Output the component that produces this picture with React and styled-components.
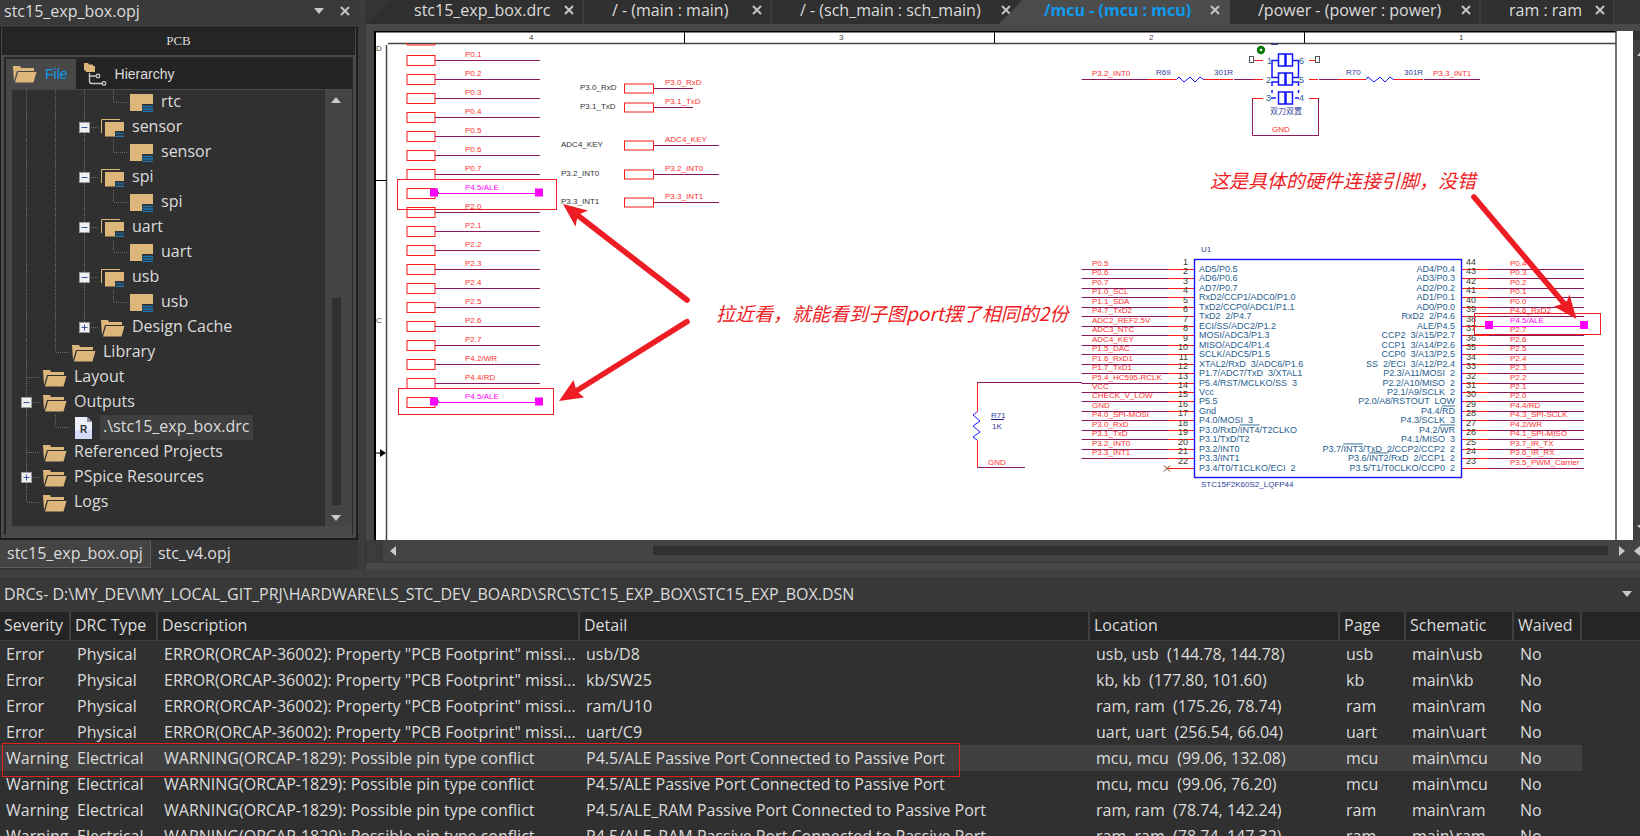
import React from 'react'
import styled, { createGlobalStyle, css } from 'styled-components'

const GlobalStyle = createGlobalStyle`
  * {
    box-sizing: border-box;
  }

  body {
    margin: 0;
    background: #3c3c3c;
    color: #dcdcdc;
    font-family: 'Open Sans', 'Noto Sans CJK SC', sans-serif;
    font-size: 16px;
  }

  button {
    margin: 0;
    padding: 0;
    border: 0;
    background: none;
    color: inherit;
    font: inherit;
    cursor: pointer;
  }

  svg {
    display: block;
  }
`

const App = styled.div`
  display: flex;
  flex-direction: column;
  height: 100vh;
  overflow: hidden;
`

const Workspace = styled.main`
  display: flex;
  flex: none;
`

/* ---------- project panel ---------- */

const Project = styled.aside`
  display: flex;
  flex-direction: column;
  flex: none;
  width: 358px;
  background: #363636;
`

const PanelTitle = styled.header`
  display: flex;
  align-items: center;
  gap: 16px;
  height: 27px;
  padding: 0 8px 6px 4px;
  background: #3a3a3a;
`

const TitleText = styled.span`
  flex: 1;
`

const ProjectFrame = styled.div`
  display: flex;
  flex-direction: column;
  flex: 1;
  border: 2px solid #1c1c1c;
  border-left-width: 1px;
  border-top-width: 1px;
  background: #4a4a4a;
`

const PcbTitle = styled.h1`
  margin: 0 1px;
  height: 27px;
  background: #252525;
  font-family: 'Liberation Serif', serif;
  font-size: 13px;
  font-weight: 400;
  line-height: 25px;
  text-align: center;
`

const ViewFrame = styled.div`
  display: flex;
  flex-direction: column;
  flex: 1;
  margin: 2px 3px 3px;
  border: solid #262626;
  border-width: 2px 1px 0 2px;
  background: #484848;
`

const ViewTabs = styled.div`
  display: flex;
  height: 30px;
  background: #232323;
`

const ViewTab = styled.button`
  display: flex;
  align-items: center;
  gap: 8px;
  padding: 0 8px 0 7px;
  background: ${props => (props.$active ? '#484848' : 'transparent')};
  color: ${props => (props.$active ? '#0e9bec' : '#dcdcdc')};
  font-family: 'Liberation Sans', sans-serif;
  font-size: 14px;
`

const TreeArea = styled.div`
  display: flex;
  flex: 1;
  margin: 1px 1px 9px 6px;
`

const Tree = styled.ul`
  flex: 1;
  margin: 0;
  padding: 0 0 10px;
  list-style: none;
  background: #303030;
`

const TreeRow = styled.li`
  display: flex;
  align-items: center;
  height: 25px;
`

const TreeLabel = styled.button`
  height: 25px;
  padding: 0 3px 2px;
  margin-left: 4px;
  line-height: 23px;
  white-space: nowrap;
  background: ${props => (props.$selected ? '#3f3f3f' : 'transparent')};
`

const TreeScroll = styled.div`
  display: flex;
  flex-direction: column;
  align-items: center;
  width: 26px;
  padding: 7px 4px 5px 0;
  background: #444;
`

const TreeThumb = styled.div`
  width: 9px;
  height: 207px;
  margin: auto 0 10px;
  background: #303030;
`

const ProjectTabs = styled.div`
  display: flex;
  height: 30px;
`

const ProjectTab = styled.button`
  height: 28px;
  padding: 0 7px 2px;
  border: solid ${props => (props.$active ? '#5c5c5c' : 'transparent')};
  border-width: 0 1px 1px 0;
  background: ${props => (props.$active ? '#444' : 'transparent')};
`

/* ---------- schematic editor ---------- */

const Editor = styled.section`
  display: flex;
  flex-direction: column;
  flex: 1;
  min-width: 0;
  margin-left: 7px;
  border-left: 1px solid #333;
`

const EditorTabs = styled.nav`
  display: flex;
  height: 24px;
  background: #343434;
`

const EditorTab = styled.div`
  display: flex;
  justify-content: space-between;
  align-items: center;
  flex: none;
  width: ${props => props.$width}px;
  padding: 0 8px 4px 28px;
  border-right: 2px solid #3d3d3d;
  background: #303030;
  white-space: nowrap;

  ${props =>
    props.$slanted &&
    css`
      padding-left: 48px;
      clip-path: polygon(24px 0, 100% 0, 100% 100%, 0 100%);
    `}

  ${props =>
    props.$active &&
    css`
      margin-left: -22px;
      padding-left: 45px;
      background: #4c4c4c;
      border-color: #4c4c4c;
      color: #0e9bec;
      font-weight: 700;
    `}
`

const Viewport = styled.div`
  display: flex;
  padding: 7px 0 0 8px;
  background: #484848;
`

const Sheet = styled.div`
  flex: 1;
  min-width: 0;
  overflow: hidden;
  background: #fff;
`

const SideScroll = styled.div`
  display: flex;
  flex-direction: column;
  justify-content: space-between;
  flex: none;
  width: 7px;
  padding: 10px 0 9px 4px;
  overflow: hidden;
  background: #404040;
  border-top: 9px solid #333;
`

const BottomScroll = styled.div`
  display: flex;
  align-items: center;
  gap: 9px;
  height: 21px;
  margin-left: 8px;
  padding: 0 0 0 7px;
  background: #444;
  border-left: 9px solid #3a3a3a;
`

const SheetThumb = styled.div`
  flex: 1;
  height: 9px;
  margin: 0 2px 0 248px;
  background: #303030;
`

const EditorFoot = styled.div`
  height: 9px;
  border-top: 2px solid #3a3a3a;
  background: #484848;
`

const Splitter = styled.div`
  flex: none;
  height: 7px;
  background: #404040;
`

/* ---------- DRC panel ---------- */

const Drc = styled.section`
  flex: 1;
  min-height: 0;
  overflow: hidden;
  background: #303030;
`

const DrcTitle = styled.header`
  display: flex;
  align-items: center;
  height: 35px;
  padding: 0 8px 2px 4px;
  background: #383838;
`

const TableWrap = styled.div`
  position: relative;
`

const Table = styled.table`
  width: 100%;
  table-layout: fixed;
  border-collapse: separate;
  border-spacing: 0;
`

const Th = styled.th`
  height: 29px;
  padding: 0 0 2px 4px;
  border-right: 2px solid #404040;
  border-bottom: 1px solid #404040;
  background: #252525;
  font-weight: 400;
  text-align: left;
  white-space: nowrap;

  &:last-child {
    border-right: 0;
  }
`

const Tr = styled.tr`
  td:not(:last-child) {
    background: ${props => (props.$selected ? '#404040' : 'transparent')};
  }
`

const Td = styled.td`
  height: 26px;
  padding: 0 0 0 6px;
  overflow: hidden;
  line-height: 24px;
  text-overflow: ellipsis;
  white-space: pre;
`

// Marks the warning row, lies over the table
const RowMark = styled.div`
  position: absolute;
  top: 131px;
  left: 2px;
  width: 958px;
  height: 34px;
  border: 1px solid #e02020;
  pointer-events: none;
`

/* ---------- icons ---------- */

const Arrow = ({ dir = 'down' }) => {
  const d = {
    down: 'M0 0H10L5 6Z',
    up: 'M0 6H10L5 0Z',
    left: 'M6 0V10L0 5Z',
    right: 'M0 0V10L6 5Z',
  }[dir]
  const flat = dir === 'down' || dir === 'up'
  return (
    <svg width={flat ? 10 : 6} height={flat ? 6 : 10} aria-hidden="true">
      <path d={d} fill="#c8c8c8" />
    </svg>
  )
}

const Cross = () => (
  <svg width="10" height="10" viewBox="0 0 10 10" aria-hidden="true">
    <path d="M1 1L9 9M9 1L1 9" stroke="#c4c4c4" strokeWidth="2" />
  </svg>
)

const Folder = () => (
  <svg width="24" height="18" viewBox="0 0 24 18" aria-hidden="true">
    <path d="M0 1H7L8 3H21V6H4L1 16Z" fill="#dcb67a" />
    <path d="M5 7H23.500L20.500 17.500H2Z" fill="#dcb67a" />
  </svg>
)

const Page = () => (
  <svg width="24" height="18" viewBox="0 0 24 18" aria-hidden="true">
    <path d="M0 0H23V10H12V17H0Z" fill="#dcb67a" />
    <path d="M12.500 12.500H23M12.500 15H23M12.500 17.500H23" stroke="#1e78b8" strokeWidth="1.300" />
  </svg>
)

const PageStack = () => (
  <svg width="24" height="18" viewBox="0 0 24 18" aria-hidden="true">
    <path d="M.5 14V.5H19" fill="none" stroke="#dcb67a" />
    <path d="M4 3H23V12H14V17.500H4Z" fill="#dcb67a" />
    <path d="M14.500 13.500H23V15.500H14.500Z" fill="#1d5c8c" />
    <path d="M14.500 17.300H23" stroke="#2a8fd6" />
  </svg>
)

const Report = () => (
  <svg width="24" height="24" viewBox="0 0 24 24" aria-hidden="true">
    <path d="M3 1H15L20 6V23H3Z" fill="#eceffb" />
    <path d="M3 14H20V23H3Z" fill="#d5dafa" />
    <path d="M15 1V6H20Z" fill="#8c8f9c" />
    <text x="11.500" y="17" textAnchor="middle" fontSize="10" fontWeight="700" fill="#333" fontFamily="Liberation Sans">
      R
    </text>
  </svg>
)

const HierarchyIcon = () => (
  <svg width="24" height="24" viewBox="0 0 24 24" aria-hidden="true">
    <path d="M1 1H5L6 2.500H10V9H3L1 8Z" fill="#dcb67a" />
    <path d="M3 4H12V10H3Z" fill="#dcb67a" />
    <path d="M6.500 11V19Q6.500 21.500 9 21.500H19.500M6.500 14H13" fill="none" stroke="#c8c8c8" strokeWidth="1.400" />
    <circle cx="15" cy="14" r="1.800" fill="none" stroke="#c8c8c8" strokeWidth="1.300" />
    <circle cx="21" cy="21.500" r="1.800" fill="none" stroke="#c8c8c8" strokeWidth="1.300" />
  </svg>
)

const icons = { folder: Folder, page: Page, stack: PageStack, report: Report }

/* ---------- project tree ---------- */

// guides: one letter per level. i = line, l = last item, t = branch,
// - and + = expander, e = last expander, space = nothing
const tree = [
  { guides: 'iiil', icon: 'page', label: 'rtc' },
  { guides: 'ii-', icon: 'stack', label: 'sensor' },
  { guides: 'iiil', icon: 'page', label: 'sensor' },
  { guides: 'ii-', icon: 'stack', label: 'spi' },
  { guides: 'iiil', icon: 'page', label: 'spi' },
  { guides: 'ii-', icon: 'stack', label: 'uart' },
  { guides: 'iiil', icon: 'page', label: 'uart' },
  { guides: 'ii-', icon: 'stack', label: 'usb' },
  { guides: 'iiil', icon: 'page', label: 'usb' },
  { guides: 'iie', icon: 'folder', label: 'Design Cache' },
  { guides: 'il', icon: 'folder', label: 'Library' },
  { guides: 't', icon: 'folder', label: 'Layout' },
  { guides: '-', icon: 'folder', label: 'Outputs' },
  { guides: 'il', icon: 'report', label: '.\\stc15_exp_box.drc', selected: true },
  { guides: 't', icon: 'folder', label: 'Referenced Projects' },
  { guides: '+', icon: 'folder', label: 'PSpice Resources' },
  { guides: 'l', icon: 'folder', label: 'Logs' },
]

const Guide = ({ kind }) => {
  const open = kind === '-'
  const expander = open || kind === '+' || kind === 'e'
  const bottom = kind === 'l' || kind === 'e' ? 12 : 25
  return (
    <svg width="29" height="25" aria-hidden="true">
      <path d={`M14.500 0V${bottom}`} stroke="#6c6c6c" strokeDasharray="1 1" />
      {kind !== 'i' && <path d="M15 12.500H30" stroke="#6c6c6c" strokeDasharray="1 1" />}
      {expander && (
        <g>
          <rect x="9.500" y="7.500" width="10" height="10" fill="#f0f0f0" stroke="#9a9a9a" />
          <path d={open ? 'M11.500 12.500H17.500' : 'M11.500 12.500H17.500M14.500 9.500V15.500'} stroke="#3b55a0" />
        </g>
      )}
    </svg>
  )
}

const IconSlot = styled.span`
  display: flex;
  flex: none;
  width: 24px;
  margin-left: 2px;
`

const TreeItem = ({ guides, icon, label, selected }) => {
  const Icon = icons[icon]
  return (
    <TreeRow>
      {guides.split('').map((kind, i) => (
        <Guide key={i} kind={kind} />
      ))}
      <IconSlot>
        <Icon />
      </IconSlot>
      <TreeLabel $selected={selected}>{label}</TreeLabel>
    </TreeRow>
  )
}

/* ---------- schematic ---------- */

const Drawing = styled.svg`
  font-family: 'Liberation Sans', 'Noto Sans CJK SC', sans-serif;
  font-size: 8px;

  text,
  tspan {
    white-space: pre;
  }

  .wire {
    stroke: #8a1a5c;
    fill: none;
  }
  .pin {
    stroke: #ff1a1a;
    fill: none;
  }
  .part {
    stroke: #1414ff;
    fill: none;
  }
  .net {
    fill: #ff3030;
  }
  .ref {
    fill: #30409c;
  }
  .name {
    fill: #27608f;
    font-size: 9px;
  }
  .number {
    fill: #3a3a2c;
    font-size: 9px;
  }
  .picked {
    fill: #f0f;
  }
  .mark {
    stroke: #ee1c24;
    fill: none;
  }
  .note {
    fill: #ee1c24;
    font-family: 'Noto Sans CJK SC', sans-serif;
    font-size: 19px;
    font-style: italic;
  }
  .over {
    text-decoration: overline;
  }
`

const leftPorts = [
  'P0.1', 'P0.2', 'P0.3', 'P0.4', 'P0.5', 'P0.6', 'P0.7', 'P4.5/ALE', 'P2.0', 'P2.1',
  'P2.2', 'P2.3', 'P2.4', 'P2.5', 'P2.6', 'P2.7', 'P4.2/WR', 'P4.4/RD', 'P4.5/ALE',
]

const midPorts = [
  { label: 'P3.0_RxD', y: 88, x: 580, end: 693 },
  { label: 'P3.1_TxD', y: 107, x: 580, end: 693 },
  { label: 'ADC4_KEY', y: 145, x: 561, end: 719 },
  { label: 'P3.2_INT0', y: 174, x: 561, end: 719 },
  { label: 'P3.3_INT1', y: 202, x: 561, end: 719 },
]

const pinsLeft = [
  ['P0.5', 'AD5/P0.5'],
  ['P0.6', 'AD6/P0.6'],
  ['P0.7', 'AD7/P0.7'],
  ['P1.0_SCL', 'RxD2/CCP1/ADC0/P1.0'],
  ['P1.1_SDA', 'TxD2/CCP0/ADC1/P1.1'],
  ['P4.7_TxD2', 'TxD2  2/P4.7'],
  ['ADC2_REF2.5V', 'ECI/SS/ADC2/P1.2'],
  ['ADC3_NTC', 'MOSI/ADC3/P1.3'],
  ['ADC4_KEY', 'MISO/ADC4/P1.4'],
  ['P1.5_DAC', 'SCLK/ADC5/P1.5'],
  ['P1.6_RxD1', 'XTAL2/RxD  3/ADC6/P1.6'],
  ['P1.7_TxD1', 'P1.7/ADC7/TxD  3/XTAL1'],
  ['P5.4_HC595-RCLK', 'P5.4/RST/MCLKO/SS  3'],
  ['VCC', 'Vcc'],
  ['CHECK_V_LOW', 'P5.5'],
  ['GND', 'Gnd'],
  ['P4.0_SPI-MOSI', 'P4.0/MOSI  3'],
  ['P3.0_RxD', 'P3.0/RxD/~INT4~/T2CLKO'],
  ['P3.1_TxD', 'P3.1/TxD/T2'],
  ['P3.2_INT0', 'P3.2/INT0'],
  ['P3.3_INT1', 'P3.3/INT1'],
  [null, 'P3.4/T0/T1CLKO/ECI  2'],
]

const pinsRight = [
  ['P0.4', 'AD4/P0.4'],
  ['P0.3', 'AD3/P0.3'],
  ['P0.2', 'AD2/P0.2'],
  ['P0.1', 'AD1/P0.1'],
  ['P0.0', 'AD0/P0.0'],
  ['P4.6_RxD2', 'RxD2  2/P4.6'],
  ['P4.5/ALE', 'ALE/P4.5'],
  ['P2.7', 'CCP2  3/A15/P2.7'],
  ['P2.6', 'CCP1  3/A14/P2.6'],
  ['P2.5', 'CCP0  3/A13/P2.5'],
  ['P2.4', 'SS  2/ECI  3/A12/P2.4'],
  ['P2.3', 'P2.3/A11/MOSI  2'],
  ['P2.2', 'P2.2/A10/MISO  2'],
  ['P2.1', 'P2.1/A9/SCLK  2'],
  ['P2.0', 'P2.0/A8/RSTOUT  LOW'],
  ['P4.4/RD', 'P4.4/~RD~'],
  ['P4.3_SPI-SCLK', 'P4.3/SCLK  3'],
  ['P4.2/WR', 'P4.2/~WR~'],
  ['P4.1_SPI-MISO', 'P4.1/MISO  3'],
  ['P3.7_IR_TX', 'P3.7/~INT3~/TxD  2/CCP2/CCP2  2'],
  ['P3.6_IR_RX', 'P3.6/~INT2~/RxD  2/CCP1  2'],
  ['P3.5_PWM_Carrier', 'P3.5/T1/T0CLKO/CCP0  2'],
]

const pinY = i => Math.round(269 + i * 9.46) + 0.5

// text between ~ is active low and gets a bar
const PinName = ({ text, ...rest }) => (
  <text className="name" {...rest}>
    {text.split('~').map((part, i) => (
      <tspan key={i} className={i === 1 ? 'over' : undefined}>
        {part}
      </tspan>
    ))}
  </text>
)

const Handle = ({ x, y }) => <rect className="picked" x={x - 4} y={y - 4} width="8" height="8" />

const SheetFrame = () => (
  <g fill="#444">
    <path d="M374 31.500H1616M375 31V540" stroke="#000" strokeWidth="2" />
    <path d="M388 43.500H1616M386.500 45V540M1616 31V540" stroke="#444" strokeWidth="1.500" />
    <path d="M684.500 32V43M994.500 32V43M1304.500 32V43M375 180.500H386" stroke="#000" />
    <path d="M375 453H382" stroke="#000" />
    <path d="M380 449L386 453L380 457Z" fill="#000" />
    <text x="529" y="40">4</text>
    <text x="839" y="40">3</text>
    <text x="1149" y="40">2</text>
    <text x="1459" y="40">1</text>
    <text x="376" y="51">D</text>
    <text x="376" y="323">C</text>
  </g>
)

const LeftPorts = () => (
  <g>
    <path className="pin" d="M407 43V45H435V43" />
    {leftPorts.map((label, i) => {
      const y = 60.5 + i * 19
      const picked = label === 'P4.5/ALE'
      return (
        <g key={i}>
          <rect className="pin" x="407" y={y - 5} width="28" height="10" />
          <path className="wire" style={picked ? { stroke: '#f0f' } : undefined} d={`M435 ${y}H540`} />
          <text className={picked ? 'picked' : 'net'} x="465" y={y - 4}>
            {label}
          </text>
          {picked && (
            <g>
              <path d={`M436 ${y - 5}L439 ${y}`} stroke="#0a6e0a" />
              <Handle x={434} y={y - 1} />
              <Handle x={539} y={y - 1} />
            </g>
          )}
        </g>
      )
    })}
  </g>
)

const MidPorts = () => (
  <g>
    {midPorts.map(({ label, y, x, end }) => (
      <g key={label}>
        <rect className="pin" x="624.500" y={y - 4} width="29" height="9" />
        <path className="wire" d={`M654 ${y + 0.5}H${end}`} />
        <text className="net" x="665" y={y - 3}>
          {label}
        </text>
        <text x={x} y={y + 2} fill="#333">
          {label}
        </text>
      </g>
    ))}
  </g>
)

const SwitchPart = () => (
  <g>
    <path className="wire" d="M1081.500 79.500H1148M1234 79.500H1253M1319 79.500H1338M1424 79.500H1480M1252.500 98V135.500H1318.500V98" />
    <path
      className="pin"
      d="M1148 79.500H1176.500M1204 79.500H1233M1253 79.500H1263M1309 79.500H1318M1338 79.500H1366M1394 79.500H1423
        M1254 60.500H1263M1309 60.500H1315M1252 98.500H1263M1309 98.500H1318"
    />
    <path
      className="part"
      d="M1176.500 79.500L1179 77L1184 82L1190 77L1195 82L1200 77L1204 80M1366 79.500L1368 77L1374 82L1380 77L1385 82L1390 77L1394 80"
    />
    <rect x="1249.500" y="56.500" width="4" height="6" fill="none" stroke="#555" />
    <rect x="1315.500" y="56.500" width="4" height="6" fill="none" stroke="#555" />
    <circle cx="1261" cy="50" r="2.700" fill="none" stroke="#087808" strokeWidth="3" />
    <path className="ref" d="M1271 44.500H1278" stroke="#30409c" />
    <g className="part" strokeWidth="1.500">
      <path d="M1278.500 54H1292.500V66H1278.500ZM1278.500 73H1292.500V85H1278.500ZM1278.500 92H1292.500V104H1278.500Z" />
      <path d="M1285.500 54V66M1285.500 73V85M1285.500 92V104" strokeWidth="2.500" />
      <path d="M1278 60.500H1272V77.500H1278M1293 60.500H1298.500V77.500H1293M1278 82H1272V86M1293 82H1298.500V86M1272 90V93M1298.500 90V93M1271 98H1276M1295 98H1299" />
    </g>
    <g className="name">
      <text x="1267" y="64">1</text>
      <text x="1266" y="83">2</text>
      <text x="1266" y="101">3</text>
      <text x="1299" y="64">6</text>
      <text x="1299" y="83">5</text>
      <text x="1299" y="101">4</text>
    </g>
    <text className="net" x="1092" y="76">P3.2_INT0</text>
    <text className="net" x="1433" y="76">P3.3_INT1</text>
    <text className="net" x="1272" y="132">GND</text>
    <g className="ref">
      <text x="1156" y="75">R69</text>
      <text x="1214" y="75">301R</text>
      <text x="1346" y="75">R70</text>
      <text x="1404" y="75">301R</text>
      <text x="1270" y="114">双刀双置</text>
    </g>
  </g>
)

const Pulldown = () => (
  <g>
    <path className="wire" d="M977 382.500H1082M977 467.500H1025" />
    <path className="pin" d="M977.500 383V412M977.500 440V467" />
    <path className="part" d="M977 412L973 415L980 421L973 426L980 432L973 437L977 440" />
    <path d="M991 419.500H1004" stroke="#20207c" />
    <text className="ref" x="991" y="418">R71</text>
    <text className="ref" x="992" y="429">1K</text>
    <text className="net" x="988" y="465">GND</text>
  </g>
)

const Mcu = () => (
  <g>
    {pinsLeft.map(([net, name], i) => {
      const y = pinY(i)
      return (
        <g key={name}>
          {net && <path className="wire" d={`M1081.500 ${y}H1168`} />}
          <path className="pin" d={`M1168 ${y}H1194`} />
          {net && <text className="net" x="1092" y={y - 4}>{net}</text>}
          <text className="number" x="1188" y={y - 5} textAnchor="end">{i + 1}</text>
          <PinName text={name} x="1199" y={y + 2} />
        </g>
      )
    })}
    <path d={`M1164 ${pinY(21) - 3}L1170 ${pinY(21) + 3}M1170 ${pinY(21) - 3}L1164 ${pinY(21) + 3}`} stroke="#7a3a10" />
    {pinsRight.map(([net, name], i) => {
      const y = pinY(i)
      const picked = i === 6
      return (
        <g key={name}>
          <path className="wire" d={`M1489 ${y}H1584`} style={picked ? { stroke: '#f0f' } : undefined} />
          <path className="pin" d={`M1461 ${y}H1489`} />
          <text className={picked ? 'picked' : 'net'} x="1510" y={y - 4}>{net}</text>
          <text className="number" x="1466" y={y - 5}>{44 - i}</text>
          <PinName text={name} x="1455" y={y + 2} textAnchor="end" />
        </g>
      )
    })}
    <Handle x={1489} y={325} />
    <Handle x={1584} y={325} />
    <rect className="part" x="1194.500" y="259.500" width="267" height="218" strokeWidth="1.400" />
    <text className="ref" x="1201" y="252">U1</text>
    <text className="ref" x="1201" y="487">STC15F2K60S2_LQFP44</text>
  </g>
)

const Notes = () => (
  <g>
    <rect className="mark" x="397.500" y="179.500" width="159" height="30" />
    <rect className="mark" x="398.500" y="388.500" width="155" height="26" />
    <rect className="mark" x="1474.500" y="313.500" width="126" height="21" />
    <path
      className="mark"
      strokeWidth="5.600"
      strokeLinecap="round"
      d="M687 300L576 214M687 321.700L573 393M1474 197L1567 307"
    />
    <path
      fill="#ee1c24"
      d="M563 204L588 210.500L580 214L577 219L575.500 226.500ZM559 401L573.500 380L576 389L579 393L584 397.500ZM1576.500 319L1554 306.500L1562 304L1567 301L1569.500 294.500Z"
    />
    <text className="note" x="716" y="321">拉近看，就能看到子图port摆了相同的2份</text>
    <text className="note" x="1210" y="188">这是具体的硬件连接引脚，没错</text>
  </g>
)

const Schematic = () => (
  <Drawing width="1259" height="509" viewBox="374 31 1259 509" role="img" aria-label="mcu">
    <SheetFrame />
    <LeftPorts />
    <MidPorts />
    <SwitchPart />
    <Pulldown />
    <Mcu />
    <Notes />
  </Drawing>
)

/* ---------- data ---------- */

const editorTabs = [
  { label: 'stc15_exp_box.drc', width: 218, slanted: true },
  { label: '/ - (main : main)', width: 188 },
  { label: '/ - (sch_main : sch_main)', width: 249 },
  { label: '/mcu - (mcu : mcu)', width: 231, slanted: true, active: true },
  { label: '/power - (power : power)', width: 251 },
  { label: 'ram : ram', width: 134 },
]

const columns = [
  ['Severity', 71],
  ['DRC Type', 87],
  ['Description', 422],
  ['Detail', 510],
  ['Location', 250],
  ['Page', 66],
  ['Schematic', 108],
  ['Waived', 68],
  ['', null],
]

const footprint = 'ERROR(ORCAP-36002): Property "PCB Footprint" missi...'
const conflict = 'WARNING(ORCAP-1829): Possible pin type conflict'
const ale = 'P4.5/ALE Passive Port Connected to Passive Port'
const aleRam = 'P4.5/ALE_RAM Passive Port Connected to Passive Port'

const rows = [
  ['Error', 'Physical', footprint, 'usb/D8', 'usb, usb  (144.78, 144.78)', 'usb', 'main\\usb', 'No'],
  ['Error', 'Physical', footprint, 'kb/SW25', 'kb, kb  (177.80, 101.60)', 'kb', 'main\\kb', 'No'],
  ['Error', 'Physical', footprint, 'ram/U10', 'ram, ram  (175.26, 78.74)', 'ram', 'main\\ram', 'No'],
  ['Error', 'Physical', footprint, 'uart/C9', 'uart, uart  (256.54, 66.04)', 'uart', 'main\\uart', 'No'],
  ['Warning', 'Electrical', conflict, ale, 'mcu, mcu  (99.06, 132.08)', 'mcu', 'main\\mcu', 'No'],
  ['Warning', 'Electrical', conflict, ale, 'mcu, mcu  (99.06, 76.20)', 'mcu', 'main\\mcu', 'No'],
  ['Warning', 'Electrical', conflict, aleRam, 'ram, ram  (78.74, 142.24)', 'ram', 'main\\ram', 'No'],
  ['Warning', 'Electrical', conflict, aleRam, 'ram, ram  (78.74, 147.32)', 'ram', 'main\\ram', 'No'],
]

export default function OrcadWindow() {
  return (
    <App>
      <GlobalStyle />
      <Workspace>
        <Project>
          <PanelTitle>
            <TitleText>stc15_exp_box.opj</TitleText>
            <button aria-label="Panel menu"><Arrow /></button>
            <button aria-label="Close panel"><Cross /></button>
          </PanelTitle>
          <ProjectFrame>
            <PcbTitle>PCB</PcbTitle>
            <ViewFrame>
              <ViewTabs>
                <ViewTab $active>
                  <Folder />
                  File
                </ViewTab>
                <ViewTab>
                  <HierarchyIcon />
                  Hierarchy
                </ViewTab>
              </ViewTabs>
              <TreeArea>
                <Tree>
                  {tree.map((item, i) => (
                    <TreeItem key={i} {...item} />
                  ))}
                </Tree>
                <TreeScroll>
                  <button aria-label="Scroll up"><Arrow dir="up" /></button>
                  <TreeThumb />
                  <button aria-label="Scroll down"><Arrow /></button>
                </TreeScroll>
              </TreeArea>
            </ViewFrame>
          </ProjectFrame>
          <ProjectTabs>
            <ProjectTab $active>stc15_exp_box.opj</ProjectTab>
            <ProjectTab>stc_v4.opj</ProjectTab>
          </ProjectTabs>
        </Project>
        <Editor>
          <EditorTabs>
            {editorTabs.map(tab => (
              <EditorTab key={tab.label} $width={tab.width} $slanted={tab.slanted} $active={tab.active}>
                <button>{tab.label}</button>
                <button aria-label={`Close ${tab.label}`}><Cross /></button>
              </EditorTab>
            ))}
          </EditorTabs>
          <Viewport>
            <Sheet>
              <Schematic />
            </Sheet>
            <SideScroll>
              <Arrow dir="up" />
              <Arrow />
            </SideScroll>
          </Viewport>
          <BottomScroll>
            <button aria-label="Scroll left"><Arrow dir="left" /></button>
            <SheetThumb />
            <button aria-label="Scroll right"><Arrow dir="right" /></button>
            <button aria-label="Previous pane"><Arrow dir="left" /></button>
          </BottomScroll>
          <EditorFoot />
        </Editor>
      </Workspace>
      <Splitter />
      <Drc>
        <DrcTitle>
          <TitleText>DRCs- D:\MY_DEV\MY_LOCAL_GIT_PRJ\HARDWARE\LS_STC_DEV_BOARD\SRC\STC15_EXP_BOX\STC15_EXP_BOX.DSN</TitleText>
          <button aria-label="DRC menu"><Arrow /></button>
        </DrcTitle>
        <TableWrap>
          <Table>
            <colgroup>
              {columns.map(([label, width]) => (
                <col key={label} width={width || undefined} />
              ))}
            </colgroup>
            <thead>
              <tr>
                {columns.map(([label]) => (
                  <Th key={label}>{label}</Th>
                ))}
              </tr>
            </thead>
            <tbody>
              {rows.map((row, i) => (
                <Tr key={i} $selected={i === 4}>
                  {row.map((cell, j) => (
                    <Td key={j}>{cell}</Td>
                  ))}
                  <Td />
                </Tr>
              ))}
            </tbody>
          </Table>
          <RowMark />
        </TableWrap>
      </Drc>
    </App>
  )
}
